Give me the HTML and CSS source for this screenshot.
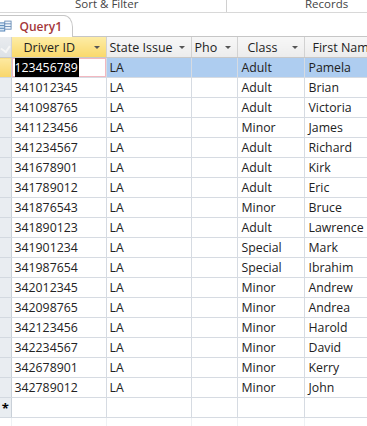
FILE: index.html
```html
<!DOCTYPE html>
<html>
<head>
<meta charset="utf-8">
<link rel="stylesheet" href="styles.css">
</head>
<body>
<div class="ribbon">
  <div class="group g1"><span>Sort &amp; Filter</span></div>
  <div class="group g2"><span>Records</span></div>
</div>
<div class="tabstrip">
  <div class="tab">
    <svg class="qicon" width="15" height="13" viewBox="0 0 15 13">
      <rect x="0.5" y="2.5" width="7" height="9" fill="#d6e6f5" stroke="#4a7db4"/>
      <line x1="0.5" y1="5.5" x2="7.5" y2="5.5" stroke="#4a7db4"/>
      <line x1="0.5" y1="8.5" x2="7.5" y2="8.5" stroke="#4a7db4"/>
      <rect x="7.5" y="0.5" width="7" height="9" fill="#eef4fb" stroke="#6b8fb8"/>
      <line x1="7.5" y1="3.5" x2="14.5" y2="3.5" stroke="#6b8fb8"/>
      <line x1="7.5" y1="6.5" x2="14.5" y2="6.5" stroke="#6b8fb8"/>
    </svg>
    <span class="tabtext">Query1</span>
  </div>
</div>
<div class="gridwrap">
<table class="grid">
  <colgroup>
    <col class="c-sel"><col class="c-id"><col class="c-state"><col class="c-phone"><col class="c-class"><col class="c-first">
  </colgroup>
  <thead>
    <tr>
      <th class="corner"><span class="tick"></span></th>
      <th class="hot"><span class="hl">Driver ID</span><span class="arr"></span></th>
      <th><span class="hl left">State Issue</span><span class="arr"></span></th>
      <th><span class="hl left">Pho</span><span class="arr"></span></th>
      <th><span class="hl">Class</span><span class="arr"></span></th>
      <th><span class="hl left">First Name</span></th>
    </tr>
  </thead>
  <tbody>
    <tr class="cur"><td class="sel on"></td><td class="focus"><span class="mark">123456789</span></td><td>LA</td><td></td><td>Adult</td><td>Pamela</td></tr>
    <tr><td class="sel"></td><td>341012345</td><td>LA</td><td></td><td>Adult</td><td>Brian</td></tr>
    <tr><td class="sel"></td><td>341098765</td><td>LA</td><td></td><td>Adult</td><td>Victoria</td></tr>
    <tr><td class="sel"></td><td>341123456</td><td>LA</td><td></td><td>Minor</td><td>James</td></tr>
    <tr><td class="sel"></td><td>341234567</td><td>LA</td><td></td><td>Adult</td><td>Richard</td></tr>
    <tr><td class="sel"></td><td>341678901</td><td>LA</td><td></td><td>Adult</td><td>Kirk</td></tr>
    <tr><td class="sel"></td><td>341789012</td><td>LA</td><td></td><td>Adult</td><td>Eric</td></tr>
    <tr><td class="sel"></td><td>341876543</td><td>LA</td><td></td><td>Minor</td><td>Bruce</td></tr>
    <tr><td class="sel"></td><td>341890123</td><td>LA</td><td></td><td>Adult</td><td>Lawrence</td></tr>
    <tr><td class="sel"></td><td>341901234</td><td>LA</td><td></td><td>Special</td><td>Mark</td></tr>
    <tr><td class="sel"></td><td>341987654</td><td>LA</td><td></td><td>Special</td><td>Ibrahim</td></tr>
    <tr><td class="sel"></td><td>342012345</td><td>LA</td><td></td><td>Minor</td><td>Andrew</td></tr>
    <tr><td class="sel"></td><td>342098765</td><td>LA</td><td></td><td>Minor</td><td>Andrea</td></tr>
    <tr><td class="sel"></td><td>342123456</td><td>LA</td><td></td><td>Minor</td><td>Harold</td></tr>
    <tr><td class="sel"></td><td>342234567</td><td>LA</td><td></td><td>Minor</td><td>David</td></tr>
    <tr><td class="sel"></td><td>342678901</td><td>LA</td><td></td><td>Minor</td><td>Kerry</td></tr>
    <tr><td class="sel"></td><td>342789012</td><td>LA</td><td></td><td>Minor</td><td>John</td></tr>
    <tr class="new"><td class="sel star">*</td><td></td><td></td><td></td><td></td><td></td></tr>
    <tr class="filler"><td class="sel"></td><td></td><td></td><td></td><td></td><td></td></tr>
  </tbody>
</table>
</div>
</body>
</html>
```

FILE: styles.css
```css
html, body {
  margin: 0;
  padding: 0;
  background: #ffffff;
  overflow: hidden;
  width: 367px;
  height: 426px;
}
body {
  font-family: "Open Sans", "Noto Sans", sans-serif;
  color: #1f1f1f;
}
.ribbon {
  height: 12px;
  display: flex;
  background: #ffffff;
  border-bottom: 1px solid #d8d8d8;
  overflow: hidden;
}
.group {
  display: flex;
  overflow: hidden;
}
.group span {
  font-size: 11.5px;
  line-height: 12px;
  margin-top: -2px;
  color: #444444;
  white-space: nowrap;
}
.g1 {
  width: 227px;
  border-right: 1px solid #d0d0d0;
  padding-left: 75px;
  box-sizing: border-box;
}
.g2 {
  flex: 1;
  padding-left: 78px;
}
.tabstrip {
  height: 23px;
  background: #ffffff;
  display: flex;
  align-items: flex-end;
  border-bottom: 1px solid #c6c6c6;
}
.tab {
  height: 21px;
  width: 62px;
  padding-right: 10px;
  display: flex;
  align-items: center;
  background: #ffffff;
  border: 1px solid #c6c6c6;
  border-left: none;
  border-bottom: none;
  border-top-right-radius: 9px 12px;
  margin-bottom: -1px;
  box-sizing: content-box;
}
.qicon {
  margin-left: -2px;
  margin-right: 8px;
}
.tabtext {
  font-size: 12px;
  font-weight: 600;
  color: #a4373a;
}
.gridwrap {
  width: 367px;
  overflow: hidden;
}
.grid {
  border-collapse: collapse;
  table-layout: fixed;
  width: 420px;
  font-size: 12.3px;
}
.c-sel { width: 11px; }
.c-id { width: 95px; }
.c-state { width: 85px; }
.c-phone { width: 46px; }
.c-class { width: 67px; }
.c-first { width: 116px; }
th {
  height: 20px;
  padding: 0;
  font-weight: normal;
  background: linear-gradient(#f7f7f7, #ececec);
  border-right: 1px solid #d2d2d2;
  border-bottom: 1px solid #c8c8c8;
  position: relative;
  text-align: left;
  white-space: nowrap;
  overflow: hidden;
  color: #222222;
  font-size: 12.5px;
}
th.hot {
  background: linear-gradient(#fdeca6, #f9d86b);
}
th.corner {
  background: linear-gradient(#e9ecef, #dde2e7);
}
.tick {
  position: absolute;
  left: 2px;
  top: 7px;
  width: 5px;
  height: 6px;
  border-right: 2px solid #f6f6f6;
  border-bottom: 2px solid #f6f6f6;
  transform: rotate(35deg);
}
.hl {
  display: block;
  padding-left: 12px;
  padding-right: 14px;
  overflow: hidden;
}
.hl.left { padding-left: 3px; }
th:nth-child(5) .hl { padding-left: 10px; }
th:nth-child(6) .hl { padding-left: 8px; }
.arr {
  position: absolute;
  right: 6px;
  top: 9px;
  width: 0;
  height: 0;
  border-left: 3px solid transparent;
  border-right: 3px solid transparent;
  border-top: 3px solid #555555;
}
td {
  height: 19px;
  padding: 0 0 0 3px;
  border-right: 1px solid #d6dbe2;
  border-bottom: 1px solid #d6dbe2;
  white-space: nowrap;
  overflow: hidden;
  background: #ffffff;
  color: #222222;
}
td:nth-child(5) { padding-left: 4px; }
td:nth-child(6) { padding-left: 4px; }
td.sel {
  padding: 0;
  background: #e9edf1;
  border-right: 1px solid #c9d0d8;
  border-bottom: 1px solid #d3d9e0;
}
tr.cur td {
  background: #aecdf0;
}
tr.cur td.sel.on {
  background: linear-gradient(#fde9a0, #f8d66a);
}
tr.cur td.focus {
  background: #ffffff;
  box-shadow: inset 0 0 0 1px #f2b8c0;
}
.mark {
  background: #000000;
  color: #ffffff;
  padding: 1px 1px 1px 0;
}
td.star {
  font-size: 13px;
  font-weight: bold;
  text-align: center;
  line-height: 10px;
  color: #000000;
}
tr.filler td {
  border-bottom: none;
  border-right-color: #eef1f4;
  background: #ffffff;
}
tr.filler td.sel {
  background: #ffffff;
  border-right-color: #eef1f4;
}
```
